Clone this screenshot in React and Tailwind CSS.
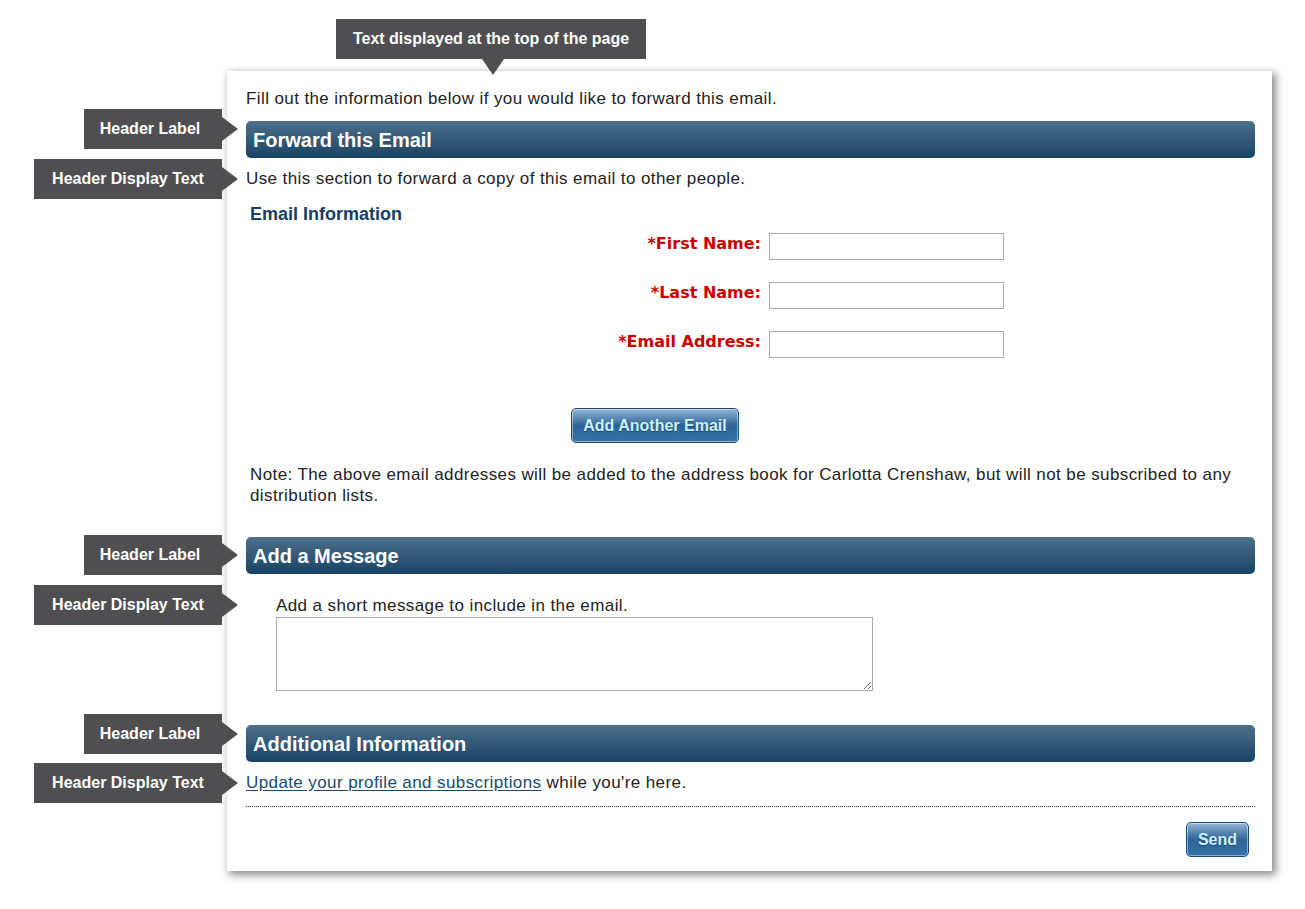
import React from "react";

const arial = { fontFamily: '"Liberation Sans", Arial, sans-serif' };

function SideCallout({ top, left, width, pr = 0, children }) {
  return (
    <div
      className="absolute h-[40px] bg-[#4f4f51] flex items-center justify-center text-white text-[16px] font-bold"
      style={{ top, left, width, paddingRight: pr, ...arial }}
    >
      {children}
      <div className="absolute left-full top-1/2 -translate-y-1/2 w-0 h-0 border-y-[12px] border-y-transparent border-l-[16px] border-l-[#4f4f51]" />
    </div>
  );
}

function HeaderBar({ children, className = "" }) {
  return (
    <div
      className={`h-[37px] rounded-[5px] bg-gradient-to-b from-[#4d708b] to-[#184364] flex items-center pl-[7px] text-white text-[20px] font-bold tracking-normal ${className}`}
    >
      {children}
    </div>
  );
}

function BlueButton({ children, className = "" }) {
  return (
    <button
      className={`h-[35px] rounded-[5px] border border-[#1b4b7c] bg-gradient-to-b from-[#93b6d6] via-[#2e6496] to-[#3372a8] shadow-[inset_0_0_0_1px_rgba(255,255,255,0.45)] text-[#cdf3ff] text-[16px] font-bold tracking-normal [text-shadow:0_1px_1px_rgba(0,0,0,0.35)] ${className}`}
      style={arial}
    >
      {children}
    </button>
  );
}

function Row({ label, className = "" }) {
  return (
    <div className={`flex items-start ${className}`}>
      <div
        className="w-[511px] pt-[1px] text-right text-[#cc0000] text-[16px] font-bold leading-[20px] tracking-normal"
        style={{ fontFamily: '"DejaVu Sans", Verdana, sans-serif' }}
      >
        {label}
      </div>
      <input
        type="text"
        className="ml-[8px] w-[235px] h-[27px] border border-[#a9a9a9] bg-white outline-none"
      />
    </div>
  );
}

const body = "text-[17px] leading-[20px] tracking-[0.4px]";

export default function App() {
  return (
    <div className="relative w-[1305px] h-[909px] bg-white pt-[71px] pl-[227px] text-[#222]" style={arial}>
      <div className="w-[1045px] bg-white shadow-[3px_3px_8px_1px_rgba(0,0,0,0.45)] pt-[18px] pl-[19px] pr-[17px] pb-[14px]">
        <div className={body}>
          Fill out the information below if you would like to forward this email.
        </div>
        <HeaderBar className="mt-[12px]">Forward this Email</HeaderBar>
        <div className={`mt-[11px] ${body}`}>
          Use this section to forward a copy of this email to other people.
        </div>
        <div className="pl-[4px]">
          <div className="mt-[15px] text-[18px] font-bold leading-[20px] text-[#173d68]">
            Email Information
          </div>
          <Row label="*First Name:" className="mt-[9px]" />
          <Row label="*Last Name:" className="mt-[22px]" />
          <Row label="*Email Address:" className="mt-[22px]" />
          <div className="mt-[50px] pl-[321px]">
            <BlueButton className="w-[168px]">Add Another Email</BlueButton>
          </div>
          <div className="mt-[21px] text-[17px] leading-[21px] tracking-[0.4px] pr-[4px]">
            Note: The above email addresses will be added to the address book for Carlotta Crenshaw, but will not be subscribed to any distribution lists.
          </div>
        </div>
        <HeaderBar className="mt-[31px]">Add a Message</HeaderBar>
        <div className="pl-[30px]">
          <div className={`mt-[22px] ${body}`}>
            Add a short message to include in the email.
          </div>
          <textarea className="block mt-[1px] w-[597px] h-[74px] border border-[#a9a9a9] outline-none" />
        </div>
        <HeaderBar className="mt-[34px]">Additional Information</HeaderBar>
        <div className={`mt-[11px] ${body}`}>
          <a className="text-[#1b4a6f] underline underline-offset-2">Update your profile and subscriptions</a>{" "}
          while you're here.
        </div>
        <div className="mt-[13px] border-t border-dotted border-[#333]" />
        <div className="mt-[15px] flex justify-end pr-[6px]">
          <BlueButton className="w-[63px]">Send</BlueButton>
        </div>
      </div>

      {/* top callout */}
      <div
        className="absolute top-[19px] left-[336px] w-[310px] h-[40px] bg-[#4f4f51] flex items-center justify-center text-white text-[16px] font-bold"
        style={arial}
      >
        Text displayed at the top of the page
        <div className="absolute top-full left-[146px] w-0 h-0 border-x-[11px] border-x-transparent border-t-[16px] border-t-[#4f4f51]" />
      </div>

      <SideCallout top={109} left={84} width={138} pr={6}>Header Label</SideCallout>
      <SideCallout top={159} left={34} width={188}>Header Display Text</SideCallout>
      <SideCallout top={535} left={84} width={138} pr={6}>Header Label</SideCallout>
      <SideCallout top={585} left={34} width={188}>Header Display Text</SideCallout>
      <SideCallout top={714} left={84} width={138} pr={6}>Header Label</SideCallout>
      <SideCallout top={763} left={34} width={188}>Header Display Text</SideCallout>
    </div>
  );
}
